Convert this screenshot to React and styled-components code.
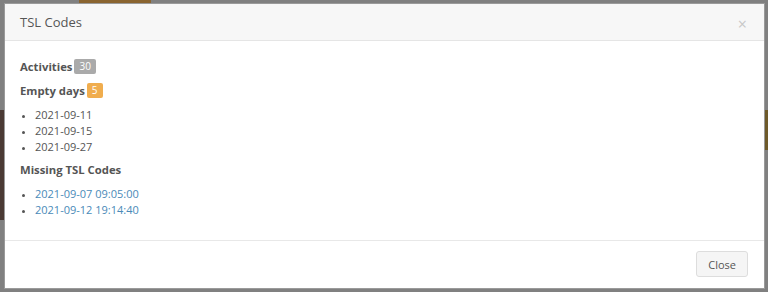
import React from 'react';
import styled, { createGlobalStyle } from 'styled-components';

const Global = createGlobalStyle`
  html, body { margin: 0; padding: 0; }
  body {
    width: 768px;
    height: 292px;
    overflow: hidden;
    background: #7f7f7f;
    font-family: "Open Sans", "Liberation Sans", sans-serif;
  }
`;

const Backdrop = styled.div`
  width: 768px;
  height: 292px;
  box-sizing: border-box;
  padding: 3px 3px 0 4px;
  background: #808080;
  position: relative;
`;

const Modal = styled.div`
  position: relative;
  z-index: 1;
  background: #fff;
  border: 1px solid #9a9a9a;
  height: 286px;
  box-sizing: border-box;
  display: flex;
  flex-direction: column;
`;

const Header = styled.div`
  height: 37px;
  box-sizing: border-box;
  background: #f7f7f7;
  border-bottom: 1px solid #e5e5e5;
  display: flex;
  align-items: center;
  justify-content: space-between;
  padding: 0 17px 0 15px;
`;

const Title = styled.h4`
  margin: 0;
  font-size: 13px;
  font-weight: 400;
  color: #555;
`;

const X = styled.span`
  font-size: 16px;
  color: #c8c8c8;
  line-height: 1;
  margin-top: 4px;
`;

const Body = styled.div`
  flex: 1;
  padding: 16px 16px 0 15px;
  color: #555;
  font-size: 11px;
`;

const Heading = styled.div`
  font-weight: 700;
  font-size: 11.3px;
  display: flex;
  align-items: center;
  gap: 2px;
  height: 18px;
  margin-bottom: ${p => p.$mb || 6}px;
`;

const Badge = styled.span`
  display: inline-block;
  background: ${p => p.$color};
  color: #fff;
  font-size: 10px;
  font-weight: 400;
  padding: 2px 5px;
  border-radius: 2px;
  line-height: 11px;
`;

const List = styled.ul`
  margin: 0 0 ${p => p.$mb || 0}px;
  padding-left: 15px;
  line-height: 16px;
  li::marker { font-size: 9px; }
`;

const Link = styled.a`
  color: #4a8ab8;
  text-decoration: none;
`;

const Footer = styled.div`
  height: 48px;
  box-sizing: border-box;
  border-top: 1px solid #e8e8e8;
  display: flex;
  align-items: center;
  justify-content: flex-end;
  padding: 0 16px 1px;
`;

const Button = styled.button`
  font-family: inherit;
  font-size: 11px;
  color: #555;
  background: #f5f5f5;
  border: 1px solid #ddd;
  border-radius: 3px;
  height: 26px;
  padding: 0 11px;
`;

const Strip = styled.div`
  position: absolute;
  background: ${p => p.$c};
`;

export default function App() {
  return (
    <>
      <Global />
      <Backdrop>
        <Strip $c="#8a6430" style={{ left: 79, top: 0, width: 72, height: 3 }} />
        <Strip $c="#4a3a34" style={{ left: 0, top: 110, width: 4, height: 110 }} />
        <Strip $c="#6e5a2a" style={{ left: 764, top: 110, width: 4, height: 40 }} />
        <Modal>
          <Header>
            <Title>TSL Codes</Title>
            <X>×</X>
          </Header>
          <Body>
            <Heading>Activities <Badge $color="#aaaaaa">30</Badge></Heading>
            <Heading $mb={8}>Empty days <Badge $color="#f0ad4e">5</Badge></Heading>
            <List $mb={5}>
              <li>2021-09-11</li>
              <li>2021-09-15</li>
              <li>2021-09-27</li>
            </List>
            <Heading $mb={8}>Missing TSL Codes</Heading>
            <List>
              <li><Link href="#">2021-09-07 09:05:00</Link></li>
              <li><Link href="#">2021-09-12 19:14:40</Link></li>
            </List>
          </Body>
          <Footer>
            <Button>Close</Button>
          </Footer>
        </Modal>
      </Backdrop>
    </>
  );
}
